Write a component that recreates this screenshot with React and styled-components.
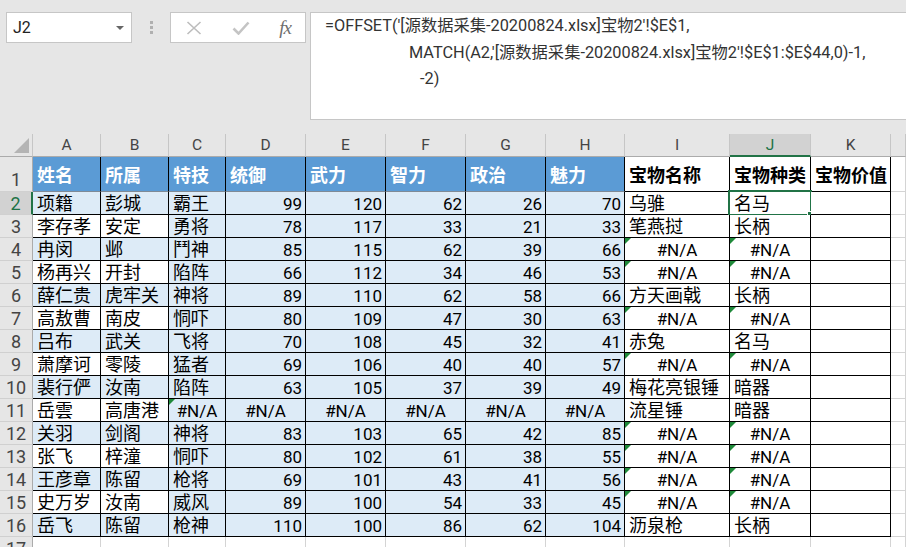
import React from 'react'
import styled, { createGlobalStyle, css } from 'styled-components'

const GlobalStyle = createGlobalStyle`
    html, body {
        margin: 0;
        padding: 0;
        background: #ffffff;
    }
    body {
        font-family: "Roboto", "Noto Sans CJK SC", sans-serif;
    }
`

const COLS = [33, 68, 68, 57, 80, 80, 80, 80, 79, 105, 81, 80]
const LETTERS = ['A', 'B', 'C', 'D', 'E', 'F', 'G', 'H', 'I', 'J', 'K', 'L']
const HEAD = ['姓名', '所属', '特技', '统御', '武力', '智力', '政治', '魅力', '宝物名称', '宝物种类', '宝物价值']

const NA = '#N/A'
const ROWS = [
    ['项籍', '彭城', '霸王', 99, 120, 62, 26, 70, '乌骓', '名马'],
    ['李存孝', '安定', '勇将', 78, 117, 33, 21, 33, '笔燕挝', '长柄'],
    ['冉闵', '邺', '鬥神', 85, 115, 62, 39, 66, NA, NA],
    ['杨再兴', '开封', '陷阵', 66, 112, 34, 46, 53, NA, NA],
    ['薛仁贵', '虎牢关', '神将', 89, 110, 62, 58, 66, '方天画戟', '长柄'],
    ['高敖曹', '南皮', '恫吓', 80, 109, 47, 30, 63, NA, NA],
    ['吕布', '武关', '飞将', 70, 108, 45, 32, 41, '赤兔', '名马'],
    ['萧摩诃', '零陵', '猛者', 69, 106, 40, 40, 57, NA, NA],
    ['裴行俨', '汝南', '陷阵', 63, 105, 37, 39, 49, '梅花亮银锤', '暗器'],
    ['岳雲', '高唐港', NA, NA, NA, NA, NA, NA, '流星锤', '暗器'],
    ['关羽', '剑阁', '神将', 83, 103, 65, 42, 85, NA, NA],
    ['张飞', '梓潼', '恫吓', 80, 102, 61, 38, 55, NA, NA],
    ['王彦章', '陈留', '枪将', 69, 101, 43, 41, 56, NA, NA],
    ['史万岁', '汝南', '威风', 89, 100, 54, 33, 45, NA, NA],
    ['岳飞', '陈留', '枪神', 110, 100, 86, 62, 104, '沥泉枪', '长柄'],
]

const App = () => {
    return (
        <Page>
            <GlobalStyle />
            <TopBar>
                <NameBox>
                    J2
                    <Caret />
                </NameBox>
                <Grip>
                    <Dot />
                    <Dot />
                    <Dot />
                </Grip>
                <FxButtons>
                    <svg width="16" height="14" viewBox="0 0 16 14">
                        <path d="M1.5 1 L14.5 13 M14.5 1 L1.5 13" stroke="#bdbdbd" strokeWidth="1.6" fill="none" />
                    </svg>
                    <svg width="18" height="14" viewBox="0 0 18 14">
                        <path d="M1.5 7.5 L6.5 12.5 L16.5 1.5" stroke="#c4c4c4" strokeWidth="2.6" fill="none" />
                    </svg>
                    <FxLabel>fx</FxLabel>
                </FxButtons>
                <FormulaBar>
                    <FormulaLine $indent={0}>=OFFSET('[源数据采集-20200824.xlsx]宝物2'!$E$1,</FormulaLine>
                    <FormulaLine $indent={84}>MATCH(A2,'[源数据采集-20200824.xlsx]宝物2'!$E$1:$E$44,0)-1,</FormulaLine>
                    <FormulaLine $indent={95}>-2)</FormulaLine>
                </FormulaBar>
            </TopBar>

            <Sheet>
                <Corner />
                {LETTERS.map(l => (
                    <ColHead key={l} $sel={l === 'J'}>{l === 'L' ? '' : l}</ColHead>
                ))}

                <RowHead $tall>1</RowHead>
                {HEAD.map((h, i) => (
                    <HeadCell key={h} $blue={i < 8}>{h}</HeadCell>
                ))}
                <Cell $ghost />

                {ROWS.map((row, r) => {
                    const n = r + 2
                    return (
                        <React.Fragment key={n}>
                            <RowHead $sel={n === 2}>{n}</RowHead>
                            {row.map((v, c) => {
                                const isErr = v === NA
                                const isNum = typeof v === 'number'
                                const band = c < 2 ? n % 2 === 0 : c < 8
                                const tri = isErr && (c >= 8 || c === 2)
                                return (
                                    <Cell
                                        key={c}
                                        $bg={band ? '#ddebf7' : '#ffffff'}
                                        $align={isErr ? 'center' : isNum ? 'right' : 'left'}
                                        $latin={isErr || isNum}
                                        $tri={tri}
                                    >
                                        {v}
                                        {n === 2 && c === 9 && <Selection><Handle /></Selection>}
                                    </Cell>
                                )
                            })}
                            <Cell $bg="#ffffff" />
                            <Cell $ghost />
                        </React.Fragment>
                    )
                })}

                <RowHead>17</RowHead>
                {LETTERS.map(l => (
                    <Cell key={l} $ghost />
                ))}
            </Sheet>
        </Page>
    )
}

export default App

const Page = styled.div`
    width: 906px;
    height: 547px;
    overflow: hidden;
    background: #ffffff;
`

const TopBar = styled.div`
    display: flex;
    align-items: flex-start;
    height: 134px;
    box-sizing: border-box;
    padding: 12px 0 0 6px;
    background: #e6e6e6;
`

const NameBox = styled.div`
    position: relative;
    width: 126px;
    height: 31px;
    box-sizing: border-box;
    border: 1px solid #c6c6c6;
    background: #ffffff;
    padding-left: 6px;
    display: flex;
    align-items: center;
    font-family: "Roboto", sans-serif;
    font-size: 16px;
    color: #222222;
`

const Caret = styled.span`
    position: absolute;
    right: 7px;
    top: 13px;
    width: 0;
    height: 0;
    border-left: 4px solid transparent;
    border-right: 4px solid transparent;
    border-top: 4px solid #666666;
`

const Grip = styled.div`
    width: 38px;
    height: 31px;
    display: flex;
    flex-direction: column;
    align-items: center;
    justify-content: center;
    gap: 2px;
`

const Dot = styled.span`
    width: 3px;
    height: 3px;
    background: #b0b0b0;
`

const FxButtons = styled.div`
    width: 136px;
    height: 31px;
    box-sizing: border-box;
    border: 1px solid #c6c6c6;
    background: #ffffff;
    display: flex;
    align-items: center;
    justify-content: space-between;
    padding: 1px 14px 0 15px;
`

const FxLabel = styled.span`
    font-family: "Liberation Serif", serif;
    font-style: italic;
    font-size: 19px;
    color: #6e6e6e;
    letter-spacing: -1px;
`

const FormulaBar = styled.div`
    margin-left: 4px;
    flex: 1;
    height: 108px;
    box-sizing: border-box;
    border: 1px solid #c6c6c6;
    border-right: none;
    background: #ffffff;
    padding: 0 0 0 14px;
`

const FormulaLine = styled.div`
    padding-left: ${p => p.$indent}px;
    font-family: "Roboto", "Noto Sans CJK SC", sans-serif;
    font-size: 16.3px;
    line-height: 26.5px;
    color: #333333;
    white-space: nowrap;
`

const Sheet = styled.div`
    display: grid;
    grid-template-columns: ${COLS.map(c => c + 'px').join(' ')} 1fr;
    grid-template-rows: 23px 35px repeat(16, 23px);
`

const Corner = styled.div`
    position: relative;
    background: #e6e6e6;
    border-right: 1px solid #c6c6c6;
    border-bottom: 1px solid #ababab;
    &::after {
        content: '';
        position: absolute;
        right: 3px;
        bottom: 3px;
        width: 0;
        height: 0;
        border-left: 15px solid transparent;
        border-bottom: 15px solid #b4b4b4;
    }
`

const ColHead = styled.div`
    display: flex;
    align-items: center;
    justify-content: center;
    box-sizing: border-box;
    background: ${p => (p.$sel ? '#d2d2d2' : '#e6e6e6')};
    color: ${p => (p.$sel ? '#217346' : '#444444')};
    border-right: 1px solid #c6c6c6;
    border-bottom: ${p => (p.$sel ? '2px solid #217346' : '1px solid #ababab')};
    font-family: "Roboto", sans-serif;
    font-size: 15.5px;
    padding-top: ${p => (p.$sel ? '1px' : '0')};
`

const RowHead = styled.div`
    display: flex;
    align-items: ${p => (p.$tall ? 'flex-end' : 'center')};
    justify-content: center;
    box-sizing: border-box;
    background: ${p => (p.$sel ? '#d2d2d2' : '#e6e6e6')};
    color: ${p => (p.$sel ? '#217346' : '#444444')};
    border-right: ${p => (p.$sel ? '2px solid #217346' : '1px solid #ababab')};
    border-bottom: 1px solid #d0d0d0;
    font-family: "Roboto", sans-serif;
    font-size: 18px;
    line-height: 22px;
    padding-top: 2px;
`

const HeadCell = styled.div`
    display: flex;
    align-items: center;
    box-sizing: border-box;
    padding: 0 4px 0;
    background: ${p => (p.$blue ? '#5b9bd5' : '#ffffff')};
    color: ${p => (p.$blue ? '#ffffff' : '#000000')};
    border-right: 1px solid #000000;
    border-bottom: 1px solid ${p => (p.$blue ? '#7f8a96' : '#000000')};
    font-family: "Noto Sans CJK SC", sans-serif;
    font-weight: 700;
    font-size: 18px;
    white-space: nowrap;
`

const Cell = styled.div`
    position: relative;
    display: flex;
    align-items: center;
    justify-content: ${p => (p.$align === 'right' ? 'flex-end' : p.$align === 'center' ? 'center' : 'flex-start')};
    box-sizing: border-box;
    padding: 2px ${p => (p.$align === 'right' ? '3px' : '4px')} 0 4px;
    background: ${p => p.$bg || '#ffffff'};
    border-right: 1px solid #000000;
    border-bottom: 1px solid #000000;
    color: #000000;
    font-family: "Roboto", "Noto Sans CJK SC", sans-serif;
    font-size: ${p => (p.$latin ? '17px' : '18px')};
    line-height: 20px;
    white-space: nowrap;

    ${p => p.$ghost && css`
        background: #ffffff;
        border-right: 1px solid #d4d4d4;
        border-bottom: 1px solid #d4d4d4;
    `}

    ${p => p.$tri && css`
        &::before {
            content: '';
            position: absolute;
            top: 0;
            left: 0;
            width: 0;
            height: 0;
            border-top: 6px solid #1f8a3a;
            border-right: 6px solid transparent;
        }
    `}
`

const Selection = styled.span`
    position: absolute;
    top: -2px;
    left: -2px;
    right: -2px;
    bottom: -2px;
    border: 2px solid #217346;
    pointer-events: none;
`

const Handle = styled.span`
    position: absolute;
    right: -5px;
    bottom: -5px;
    width: 6px;
    height: 6px;
    background: #217346;
    border: 1px solid #ffffff;
`
